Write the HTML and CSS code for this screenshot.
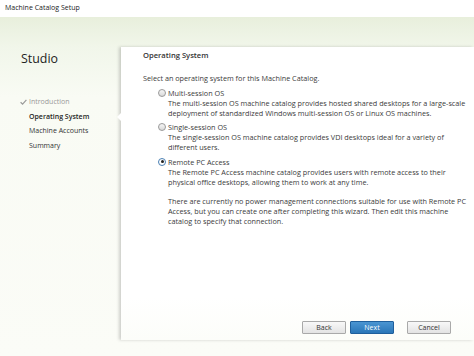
FILE: index.html
```html
<!DOCTYPE html>
<html>
<head>
    <title>Machine Catalog Setup</title>
    <link rel="stylesheet" href="styles.css">
</head>
<body>

<div class="titlebar">Machine Catalog Setup</div>

<div class="wizard">
    <div class="sidebar">
        <div class="brand">Studio</div>
        <ul class="steps">
            <li class="step done">
                <svg class="check" width="7" height="6" viewBox="0 0 7 6"><path d="M0.6 3.2 L2.6 5.1 L6.4 0.8" fill="none" stroke="#9a9a9a" stroke-width="1.2"/></svg>
                Introduction
            </li>
            <li class="step current">Operating System</li>
            <li class="step">Machine Accounts</li>
            <li class="step">Summary</li>
        </ul>
    </div>

    <div class="panel">
        <div class="panel-title">Operating System</div>
        <p class="intro">Select an operating system for this Machine Catalog.</p>

        <div class="option">
            <div class="option-label"><span class="radio"></span>Multi-session OS</div>
            <div class="option-desc">The multi-session OS machine catalog provides hosted shared desktops for a large-scale deployment of standardized Windows multi-session OS or Linux OS machines.</div>
        </div>
        <div class="option">
            <div class="option-label"><span class="radio"></span>Single-session OS</div>
            <div class="option-desc">The single-session OS machine catalog provides VDI desktops ideal for a variety of different users.</div>
        </div>
        <div class="option">
            <div class="option-label"><span class="radio checked"></span>Remote PC Access</div>
            <div class="option-desc">The Remote PC Access machine catalog provides users with remote access to their physical office desktops, allowing them to work at any time.</div>
            <div class="option-desc note">There are currently no power management connections suitable for use with Remote PC Access, but you can create one after completing this wizard. Then edit this machine<br>catalog to specify that connection.</div>
        </div>

        <div class="actions">
            <button class="btn">Back</button>
            <button class="btn primary">Next</button>
            <button class="btn cancel">Cancel</button>
        </div>
    </div>
</div>

</body>
</html>
```

FILE: styles.css
```css
body {
    margin: 0;
    width: 474px;
    height: 356px;
    overflow: hidden;
    font-family: "Open Sans", "Noto Sans", sans-serif;
    font-size: 7.25px;
    color: #3a3a3a;
    background: #fff;
}

.titlebar {
    height: 17px;
    line-height: 15px;
    padding-left: 5px;
    font-size: 7px;
    color: #222;
    background: #fff;
}

.wizard {
    display: flex;
    height: 339px;
    background: linear-gradient(#e8efdc 0, #f1f6ea 30px, #f9fbf4 80px, #fbfcf7 100%);
}

.sidebar {
    width: 121px;
    flex-shrink: 0;
    padding-top: 34px;
    box-sizing: border-box;
}
.brand {
    padding-left: 21px;
    font-size: 12.4px;
    line-height: 16px;
    color: #222;
}
.steps {
    list-style: none;
    margin: 28px 0 0;
    padding: 0;
}
.step {
    position: relative;
    padding-left: 29px;
    line-height: 14.5px;
    font-size: 7px;
    color: #333;
}
.step.done {
    color: #999;
}
.step.current {
    font-weight: 600;
    color: #1e1e1e;
}
.check {
    position: absolute;
    left: 20px;
    top: 4px;
}

.panel {
    position: relative;
    flex: 1;
    min-width: 0;
    display: flex;
    flex-direction: column;
    margin: 30px 0 16px;
    padding: 3px 6px 6px 22px;
    background: linear-gradient(#fff 0, #fff 250px, #fcfdf9 100%);
    box-shadow: -2px 0 3px rgba(0, 0, 0, 0.18);
}
.panel::before {
    content: "";
    position: absolute;
    left: -4px;
    top: 66px;
    width: 0;
    height: 0;
    border-top: 4px solid transparent;
    border-bottom: 4px solid transparent;
    border-right: 4px solid #fff;
}

.panel-title {
    font-weight: 600;
    font-size: 7.6px;
    line-height: 10px;
    color: #333;
}
.intro {
    margin: 13px 0 0;
    line-height: 10px;
}

.option {
    margin-top: 4.5px;
    padding-left: 25px;
}
.option-label {
    display: flex;
    align-items: center;
    line-height: 10px;
    margin-left: -10px;
}
.option-desc {
    line-height: 10px;
    width: 300px;
}
.option-desc.note {
    margin-top: 9px;
}

.radio {
    width: 6px;
    height: 6px;
    margin-right: 2px;
    border: 1px solid #9a9a9a;
    border-radius: 50%;
    background: linear-gradient(#f6f6f6, #d9d9d9);
    position: relative;
}
.radio.checked {
    border-color: #4a7fb3;
    background: #fff;
}
.radio.checked::after {
    content: "";
    position: absolute;
    left: 1.5px;
    top: 1.5px;
    width: 3px;
    height: 3px;
    border-radius: 50%;
    background: #222;
}

.actions {
    margin-top: auto;
    margin-right: 17px;
    display: flex;
    justify-content: flex-end;
    gap: 4px;
}
.btn {
    width: 44px;
    height: 13px;
    padding: 0;
    font-family: inherit;
    font-size: 7px;
    color: #333;
    border: 1px solid #a9a9a9;
    border-radius: 1px;
    background: linear-gradient(#f8f8f8, #e3e3e3);
}
.btn.primary {
    color: #fff;
    border-color: #1f5f9c;
    background: linear-gradient(#4a95d2, #2a76b8);
}
.btn.cancel {
    margin-left: 9px;
}
```
